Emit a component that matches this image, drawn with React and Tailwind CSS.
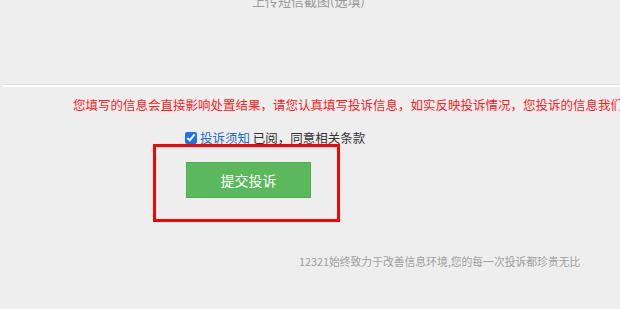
export default function App() {
  return (
    <div
      className="w-[620px] h-[309px] overflow-hidden bg-[#eeeeee]"
      style={{ fontFamily: '"Noto Sans CJK SC", "Liberation Sans", sans-serif' }}
    >
      {/* upload hint, cut at top */}
      <p className="mt-[-8px] pl-[252px] text-[13px] leading-[18px] text-[#999999]">
        上传短信截图(选填)
      </p>

      {/* divider */}
      <div className="mt-[74px] ml-[3px] h-[3px] border-t border-[#dedede] border-b-2 border-b-white" />

      {/* warning */}
      <p className="mt-[9px] pl-[73px] whitespace-nowrap text-[12.5px] leading-[18px] text-[#ff2020]">
        您填写的信息会直接影响处置结果，请您认真填写投诉信息，如实反映投诉情况，您投诉的信息我们会严格保密
      </p>

      {/* agreement */}
      <label className="mt-[16px] pl-[185px] flex items-center gap-[3px] text-[12.5px] leading-[16px] text-[#333333]">
        <input type="checkbox" defaultChecked className="w-[12px] h-[12px] m-0 accent-[#1a73e8]" />
        <span>
          <a className="text-[#1c6bc7]">投诉须知</a> 已阅，同意相关条款
        </span>
      </label>

      {/* submit, highlighted */}
      <div className="mt-[-2px] ml-[153px] w-[187px] h-[78px] border-[3px] border-[#ff0000] pt-[15px] pl-[30px]">
        <button className="w-[125px] h-[36px] bg-[#5cb85c] border border-[#4cae4c] text-white text-[14px]">
          提交投诉
        </button>
      </div>

      {/* footer */}
      <p className="mt-[31px] pl-[299px] text-[10.8px] leading-[16px] text-[#a0a0a0] whitespace-nowrap">
        12321始终致力于改善信息环境,您的每一次投诉都珍贵无比
      </p>
    </div>
  );
}
